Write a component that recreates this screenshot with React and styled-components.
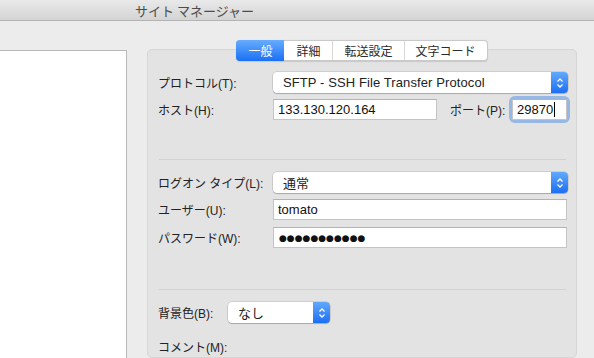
import React from "react";
import styled, { createGlobalStyle } from "styled-components";

const GlobalStyle = createGlobalStyle`
  html, body {
    margin: 0;
    padding: 0;
    background: #ececec;
    overflow: hidden;
  }
  body {
    font-family: "Liberation Sans", "Noto Sans CJK JP", sans-serif;
    color: #222;
  }
`;

function Stepper() {
  return (
    <StepperBox>
      <svg width="8" height="12" viewBox="0 0 8 12">
        <path d="M1.5 4.5 L4 2 L6.5 4.5" fill="none" stroke="#fff" strokeWidth="1.3" />
        <path d="M1.5 7.5 L4 10 L6.5 7.5" fill="none" stroke="#fff" strokeWidth="1.3" />
      </svg>
    </StepperBox>
  );
}

function Select({ value, width }) {
  return (
    <SelectBox $width={width}>
      <SelectText>{value}</SelectText>
      <Stepper />
    </SelectBox>
  );
}

function App() {
  const tabs = ["一般", "詳細", "転送設定", "文字コード"];
  return (
    <>
      <GlobalStyle />
      <Window>
        <TitleBar>
          <Title>サイト マネージャー</Title>
        </TitleBar>
        <Body>
          <SiteList />
          <Right>
            <Tabs>
              {tabs.map((t, i) => (
                <Tab key={t} $active={i === 0}>
                  {t}
                </Tab>
              ))}
            </Tabs>
            <Group>
              <Row>
                <Label>プロトコル(T):</Label>
                <Select value="SFTP - SSH File Transfer Protocol" />
              </Row>
              <Row $gap={6}>
                <Label>ホスト(H):</Label>
                <TextField $width={164}>133.130.120.164</TextField>
                <PortLabel>ポート(P):</PortLabel>
                <FocusRing>
                  <TextField $width={55}>
                    29870<Caret />
                  </TextField>
                </FocusRing>
              </Row>
              <Separator $top={39} />
              <Row $gap={12}>
                <Label>ログオン タイプ(L):</Label>
                <Select value="通常" />
              </Row>
              <Row $gap={6}>
                <Label>ユーザー(U):</Label>
                <TextField>tomato</TextField>
              </Row>
              <Row $gap={7}>
                <Label>パスワード(W):</Label>
                <TextField>
                  <Dots>●●●●●●●●●●●</Dots>
                </TextField>
              </Row>
              <Separator $top={41} />
              <Row $gap={12}>
                <ShortLabel>背景色(B):</ShortLabel>
                <Select value="なし" width={102} />
              </Row>
              <Row $gap={13}>
                <Label>コメント(M):</Label>
              </Row>
            </Group>
          </Right>
        </Body>
      </Window>
    </>
  );
}

const Window = styled.div`
  width: 594px;
  height: 358px;
  overflow: hidden;
  display: flex;
  flex-direction: column;
`;

const TitleBar = styled.div`
  height: 20px;
  flex: none;
  background: linear-gradient(#e9e9e9, #d4d4d4);
  border-bottom: 1px solid #b4b4b4;
  display: flex;
  align-items: center;
  padding-left: 135px;
`;

const Title = styled.div`
  font-size: 13px;
  color: #4c4c4c;
  font-family: "Noto Sans CJK JP", sans-serif;
`;

const Body = styled.div`
  flex: 1;
  display: flex;
  padding-top: 29px;
  gap: 20px;
`;

const SiteList = styled.div`
  width: 126px;
  background: #fff;
  border-top: 1px solid #b9b9b9;
  border-right: 1px solid #b9b9b9;
`;

const Right = styled.div`
  width: 430px;
  display: flex;
  flex-direction: column;
  margin-top: -10px;
`;

const Tabs = styled.div`
  align-self: center;
  display: flex;
  height: 21px;
  background: #fff;
  border: 1px solid #c9c9c9;
  border-radius: 4px;
  box-sizing: border-box;
  position: relative;
  z-index: 1;
  box-shadow: 0 0.5px 1px rgba(0, 0, 0, 0.12);
`;

const Tab = styled.div`
  display: flex;
  align-items: center;
  justify-content: center;
  padding: 0 11px;
  min-width: 26px;
  font-size: 12px;
  font-family: "Noto Sans CJK JP", sans-serif;
  color: ${(p) => (p.$active ? "#fff" : "#2a2a2a")};
  background: ${(p) =>
    p.$active ? "linear-gradient(#67adfd, #1a6ff5)" : "transparent"};
  border-left: ${(p) => (p.$active ? "none" : "1px solid #d6d6d6")};
  margin: ${(p) => (p.$active ? "-1px 0 -1px -1px" : "0")};
  border-radius: ${(p) => (p.$active ? "4px 0 0 4px" : "0")};
  &:first-child + & {
    border-left: none;
  }
`;

const Group = styled.div`
  margin-top: -12px;
  flex: 1;
  background: #e3e3e3;
  border: 1px solid #d6d6d6;
  border-radius: 5px;
  padding: 22px 8px 0 10px;
  display: flex;
  flex-direction: column;
`;

const Row = styled.div`
  display: flex;
  align-items: center;
  height: 21px;
  margin-top: ${(p) => p.$gap || 0}px;
`;

const Label = styled.div`
  width: 115px;
  flex: none;
  font-size: 12px;
  color: #222;
  font-family: "Liberation Sans", "Noto Sans CJK JP", sans-serif;
  white-space: nowrap;
`;

const ShortLabel = styled(Label)`
  width: 70px;
`;

const PortLabel = styled.div`
  margin-left: 12px;
  width: 61px;
  font-size: 12px;
  color: #222;
  font-family: "Liberation Sans", "Noto Sans CJK JP", sans-serif;
`;

const SelectBox = styled.div`
  ${(p) => (p.$width ? `width: ${p.$width}px;` : "flex: 1;")}
  height: 21px;
  box-sizing: border-box;
  background: #fff;
  border-radius: 4px;
  box-shadow: 0 0 0 0.5px rgba(0, 0, 0, 0.18), 0 1px 1px rgba(0, 0, 0, 0.18);
  display: flex;
  align-items: center;
  overflow: hidden;
`;

const SelectText = styled.div`
  flex: 1;
  padding-left: 10px;
  font-size: 13px;
  letter-spacing: 0.1px;
  color: #222;
  font-family: "Liberation Sans", "Noto Sans CJK JP", sans-serif;
  white-space: nowrap;
`;

const StepperBox = styled.div`
  width: 17px;
  height: 21px;
  background: linear-gradient(#62a9fc, #1c6ff4);
  display: flex;
  align-items: center;
  justify-content: center;
`;

const TextField = styled.div`
  ${(p) => (p.$width ? `width: ${p.$width}px;` : "flex: 1;")}
  height: 21px;
  box-sizing: border-box;
  background: #fff;
  border: 1px solid #c4c4c4;
  border-top-color: #b3b3b3;
  display: flex;
  align-items: center;
  padding-left: 4px;
  font-size: 13px;
  color: #111;
  font-family: "Liberation Sans", "Noto Sans CJK JP", sans-serif;
  margin-right: 1px;
`;

const FocusRing = styled.div`
  border-radius: 3px;
  box-shadow: 0 0 0 3px rgba(90, 150, 230, 0.55);
  display: flex;
  margin-left: 1px;
  & > div {
    margin-right: 0;
  }
`;

const Caret = styled.span`
  display: inline-block;
  width: 1px;
  height: 15px;
  background: #000;
  margin-left: 1px;
`;

const Dots = styled.span`
  font-size: 9px;
  letter-spacing: 0px;
  padding-left: 1px;
  font-family: "DejaVu Sans", sans-serif;
`;

const Separator = styled.div`
  height: 1px;
  background: #d2d2d2;
  margin: ${(p) => p.$top}px 2px 0 1px;
`;

export default App;
